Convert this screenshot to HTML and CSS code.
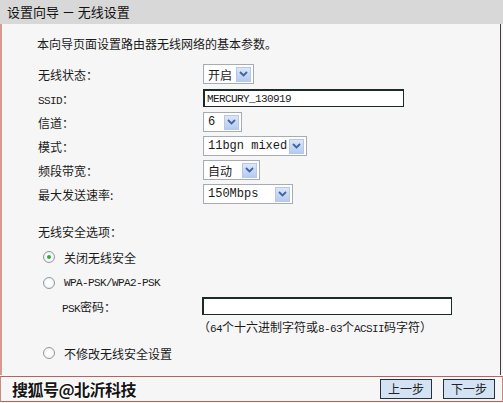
FILE: index.html
```html
<html>
    <head>
        <link rel="stylesheet" href="styles.css">
    </head>
    <body>
        <div id="wizard">
            <div id="title-bar">设置向导 － 无线设置</div>
            <div id="panel">
                <div class="intro">本向导页面设置路由器无线网络的基本参数。</div>

                <div class="row">
                    <span class="label">无线状态：</span>
                    <div class="select w-state"><span class="val">开启</span><span class="arrow"><svg width="9" height="6" viewBox="0 0 9 6"><path d="M1 1 L4.5 4.5 L8 1" fill="none" stroke="#3d64a8" stroke-width="1.8"/></svg></span></div>
                </div>
                <div class="row">
                    <span class="label"><span class="mono">SSID</span>：</span>
                    <div class="textbox w-ssid"><span class="mono">MERCURY_130919</span></div>
                </div>
                <div class="row">
                    <span class="label">信道：</span>
                    <div class="select w-chan"><span class="val mono">6</span><span class="arrow"><svg width="9" height="6" viewBox="0 0 9 6"><path d="M1 1 L4.5 4.5 L8 1" fill="none" stroke="#3d64a8" stroke-width="1.8"/></svg></span></div>
                </div>
                <div class="row">
                    <span class="label">模式：</span>
                    <div class="select w-mode"><span class="val mono">11bgn mixed</span><span class="arrow"><svg width="9" height="6" viewBox="0 0 9 6"><path d="M1 1 L4.5 4.5 L8 1" fill="none" stroke="#3d64a8" stroke-width="1.8"/></svg></span></div>
                </div>
                <div class="row">
                    <span class="label">频段带宽：</span>
                    <div class="select w-band"><span class="val">自动</span><span class="arrow"><svg width="9" height="6" viewBox="0 0 9 6"><path d="M1 1 L4.5 4.5 L8 1" fill="none" stroke="#3d64a8" stroke-width="1.8"/></svg></span></div>
                </div>
                <div class="row">
                    <span class="label">最大发送速率:</span>
                    <div class="select w-rate"><span class="val mono">150Mbps</span><span class="arrow"><svg width="9" height="6" viewBox="0 0 9 6"><path d="M1 1 L4.5 4.5 L8 1" fill="none" stroke="#3d64a8" stroke-width="1.8"/></svg></span></div>
                </div>

                <div class="section">无线安全选项：</div>

                <div class="radio-row">
                    <span class="radio checked"></span>
                    <span>关闭无线安全</span>
                </div>
                <div class="radio-row">
                    <span class="radio"></span>
                    <span class="mono">WPA-PSK/WPA2-PSK</span>
                </div>
                <div class="psk-row">
                    <span class="psk-label"><span class="mono">PSK</span>密码：</span>
                    <div class="textbox w-psk"></div>
                </div>
                <div class="hint">（<span class="mono">64</span>个十六进制字符或<span class="mono">8-63</span>个<span class="mono">ACSII</span>码字符）</div>
                <div class="radio-row last">
                    <span class="radio"></span>
                    <span>不修改无线安全设置</span>
                </div>
            </div>
            <div id="footer">
                <span class="watermark">搜狐号@北沂科技</span>
                <div class="buttons">
                    <div class="btn">上一步</div>
                    <div class="btn">下一步</div>
                </div>
            </div>
        </div>
    </body>
</html>
```

FILE: styles.css
```css
body {
    margin: 0;
    font-family: "Noto Sans CJK SC", "DejaVu Sans", sans-serif;
    font-size: 12px;
    color: #1a1a1a;
    background: #f6f6f6;
}
#wizard {
    width: 503px;
    height: 403px;
    display: flex;
    flex-direction: column;
}
#title-bar {
    height: 24px;
    line-height: 24px;
    padding-left: 7px;
    font-size: 13px;
    background: #d8d8d8;
    color: #111;
}
#panel {
    flex: 1;
    background: #f6f6f6;
    border-left: 2px solid #d79a92;
    border-right: 1px solid #4a3c3a;
    margin-right: 2px;
    padding-left: 35px;
    padding-top: 10px;
}
/* ascii text in the old router font is narrow */
.mono {
    font-family: "Liberation Mono", "DejaVu Sans Mono", monospace;
    font-size: 11px;
    letter-spacing: -0.6px;
}
.select .mono {
    font-size: 12px;
    letter-spacing: 0;
}
.intro {
    height: 20px;
    line-height: 20px;
    margin-bottom: 8px;
}
.row {
    height: 24px;
    display: flex;
    align-items: center;
    padding-left: 1px;
}
.label {
    width: 165px;
}
.select {
    height: 20px;
    box-sizing: border-box;
    border: 1px solid #a6acb3;
    background: #fff;
    display: flex;
    align-items: center;
    justify-content: space-between;
    padding-left: 4px;
    padding-right: 2px;
}
.arrow {
    width: 15px;
    height: 15px;
    box-sizing: border-box;
    border: 1px solid #b7c8e6;
    background: linear-gradient(#dbe6f7, #b6cbee);
    display: flex;
    align-items: center;
    justify-content: center;
}
.w-state { width: 51px; }
.w-chan { width: 39px; }
.w-mode { width: 104px; }
.w-band { width: 57px; }
.w-rate { width: 90px; }
.textbox {
    height: 18px;
    box-sizing: border-box;
    border: 1px solid #1d2a2a;
    border-top-width: 2px;
    border-left-width: 2px;
    background: #fff;
    display: flex;
    align-items: center;
    padding-left: 2px;
}
.w-ssid { width: 201px; }
.w-psk { width: 250px; }
.section {
    margin-top: 16px;
    height: 20px;
    line-height: 20px;
    padding-left: 1px;
}
.radio-row {
    height: 26px;
    display: flex;
    align-items: center;
    gap: 9px;
    padding-left: 6px;
}
.section + .radio-row {
    margin-top: 2px;
}
.radio {
    width: 12px;
    height: 12px;
    box-sizing: border-box;
    border-radius: 50%;
    border: 1px solid #8f9aa3;
    background: radial-gradient(circle at 50% 50%, #ffffff 30%, #e4e8ec 100%);
    display: flex;
    align-items: center;
    justify-content: center;
}
.radio.checked::after {
    content: "";
    width: 4px;
    height: 4px;
    border-radius: 50%;
    background: #3fa63f;
}
.psk-row {
    height: 20px;
    display: flex;
    align-items: center;
}
.psk-label {
    padding-left: 25px;
    width: 140px;
}
.hint {
    margin-top: 2px;
    height: 18px;
    line-height: 18px;
    padding-left: 163px;
    margin-left: -2px;
}
.radio-row.last {
    margin-top: 4px;
}
#footer {
    height: 26px;
    box-sizing: border-box;
    border-top: 1px solid #b4645a;
    border-bottom: 1px solid #b4645a;
    border-left: 1px solid #c98a82;
    border-right: 1px solid #c98a82;
    margin-top: 1px;
    margin-bottom: 1px;
    background: #f6f6f6;
    display: flex;
    align-items: center;
    justify-content: space-between;
    padding-left: 11px;
    padding-right: 7px;
}
.watermark {
    font-size: 16px;
    font-weight: bold;
    color: #151515;
    letter-spacing: -0.5px;
    text-shadow: 1px 0 0 #fff, -1px 0 0 #fff, 0 1px 0 #fff, 0 -1px 0 #fff;
}
.buttons {
    display: flex;
    gap: 11px;
}
.btn {
    width: 52px;
    height: 20px;
    box-sizing: border-box;
    border: 1px solid #24313e;
    background: #d4e3f4;
    text-align: center;
    line-height: 18px;
    font-size: 12px;
    color: #222;
}
```
